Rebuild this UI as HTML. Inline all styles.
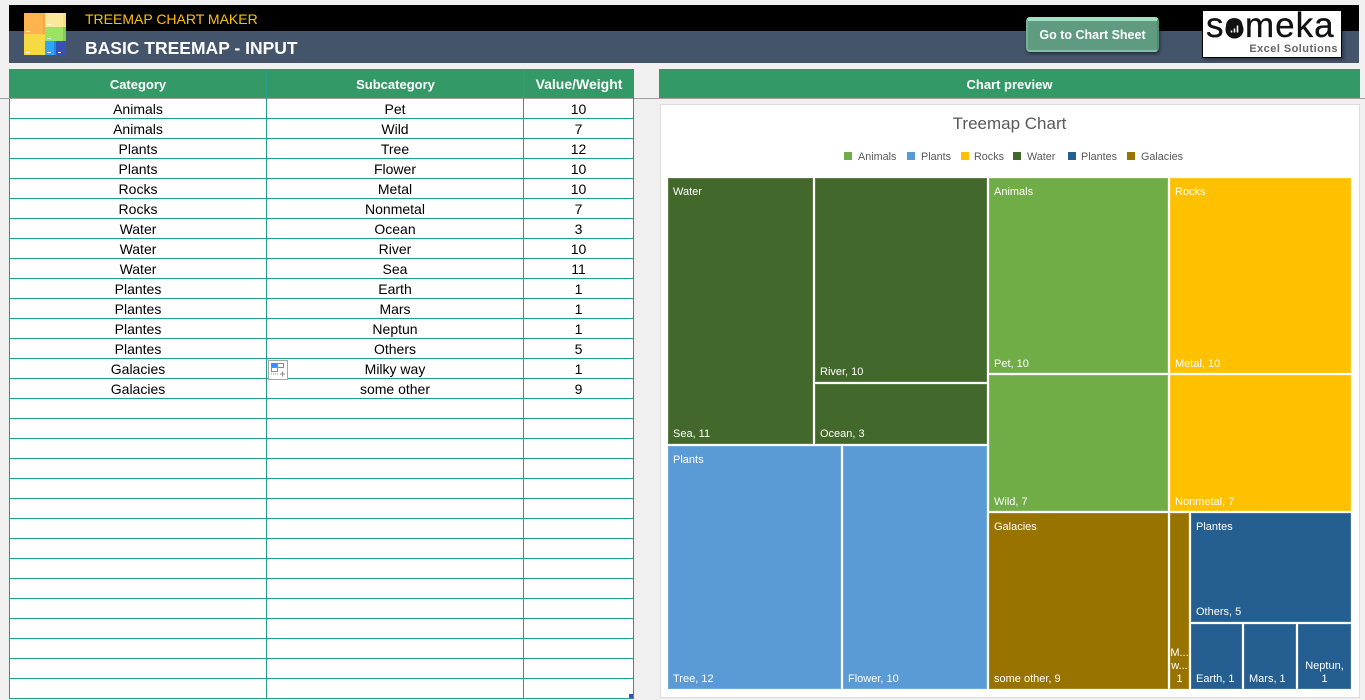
<!DOCTYPE html>
<html><head><meta charset="utf-8">
<style>
html,body{margin:0;padding:0;width:1365px;height:700px;overflow:hidden;background:#f0f0f0;font-family:"Liberation Sans",sans-serif}
.a{position:absolute}
#hb{left:9px;top:5px;width:1350px;height:26px;background:#000}
#hs{left:9px;top:31px;width:1350px;height:32px;background:#44546a}
.gh{top:69px;height:29px;background:#339966;color:#fff;font-weight:bold;font-size:13px;line-height:31px;text-align:center}
#line{left:0;top:98px;width:1365px;height:1px;background:#a0a0a0}
table{position:absolute;left:9px;top:98px;border-collapse:collapse;table-layout:fixed;width:624px;background:#fff}
td{border:1px solid #1f9e8c;height:17px;padding:2px 0 0;font-size:14px;line-height:17px;text-align:center;color:#000;overflow:hidden;white-space:nowrap}
tr:first-child td{border-top-color:#a0a0a0}
#chart{left:660px;top:104px;width:700px;height:594px;background:#fff;border:1px solid #dcdcdc;box-sizing:border-box}
.t{position:absolute;color:#fff;font-size:11px;line-height:13px;box-sizing:border-box;overflow:hidden;box-shadow:inset 0 0 0 1px rgba(255,255,255,.14)}
.t span{position:absolute;left:5px;white-space:nowrap}
.t .top{top:8px}.t .bot{bottom:3px}.t .b2{bottom:2px}
.g{background:#43682b}.b{background:#5b9bd5}.lg{background:#70ad47}.y{background:#ffc000}.br{background:#997300}.n{background:#255e91}
.lgd{top:151px;font-size:10.8px;line-height:12px;color:#595959;white-space:nowrap}
.sq{top:152px;width:8px;height:8px}
</style></head><body>
<div class="a" id="hb"></div>
<div class="a" id="hs"></div>

<svg class="a" style="left:24px;top:13px" width="42" height="42" viewBox="0 0 42 42">
<rect x="0" y="0" width="21" height="21" fill="#fdb44e"/><rect x="19" y="0" width="2" height="21" fill="#f6a64a"/>
<rect x="21" y="0" width="21" height="14" fill="#fbe99a"/><rect x="39" y="0" width="3" height="14" fill="#f4e07c"/>
<rect x="21" y="14" width="21" height="14" fill="#9be265"/><rect x="39" y="14" width="3" height="14" fill="#7fcf55"/>
<rect x="0" y="21" width="21" height="21" fill="#f5da46"/>
<rect x="21" y="28" width="9" height="14" fill="#2ea6fb"/><rect x="30" y="28" width="2" height="14" fill="#1f8ae8"/>
<rect x="32" y="28" width="10" height="14" fill="#3a50b8"/>
<g fill="#fff"><rect x="2" y="18" width="4" height="1"/><rect x="23" y="11" width="4" height="1"/><rect x="2" y="39" width="4" height="1"/><rect x="23" y="25" width="4" height="1"/><rect x="23" y="39" width="4" height="1"/><rect x="34" y="39" width="3" height="1"/></g>
</svg>

<div class="a" style="left:85px;top:10px;font-size:14px;line-height:18px;color:#ffc000;white-space:nowrap">TREEMAP CHART MAKER</div>
<div class="a" style="left:85px;top:36px;font-size:17.5px;line-height:24px;color:#fff;font-weight:bold;white-space:nowrap">BASIC TREEMAP - INPUT</div>

<div class="a" style="left:1026px;top:17px;width:133px;height:35px;box-sizing:border-box;border-radius:4px;background:#5f9b80;box-shadow:1px 2px 3px rgba(0,0,0,.45);border-top:4px solid #a3e0c0;border-bottom:2px solid #86bda2;border-left:2px solid #77b095;border-right:2px solid #4f8a70;color:#fff;font-weight:bold;font-size:12.5px;line-height:28px;text-align:center;white-space:nowrap">Go to Chart Sheet</div>

<div class="a" style="left:1202px;top:10px;width:140px;height:48px;box-sizing:border-box;background:#fff;border:1px solid #000;box-shadow:2px 2px 3px rgba(0,0,0,.3);overflow:hidden">
<div class="a" style="left:3px;top:-5px;font-size:35px;letter-spacing:1px;line-height:40px;color:#111;-webkit-text-stroke:.3px #111;white-space:nowrap">someka</div>
<svg class="a" style="left:22px;top:9px" width="19" height="19" viewBox="0 0 19 19"><circle cx="9.5" cy="9.5" r="9" fill="#111"/><path d="M6.5 12.5v-2M9.5 12.5v-4M12.5 12.5v-7" stroke="#fff" stroke-width="1.6"/></svg>
<div class="a" style="right:3px;top:32px;font-size:11px;line-height:13px;font-weight:bold;color:#666;letter-spacing:.45px;white-space:nowrap">Excel Solutions</div>
</div>

<div class="a gh" style="left:9px;width:258px">Category</div>
<div class="a gh" style="left:267px;width:257px">Subcategory</div>
<div class="a gh" style="left:524px;width:110px;font-size:14px">Value/Weight</div>
<div class="a" style="left:266px;top:69px;width:1px;height:29px;background:#2a9d8f"></div>
<div class="a" style="left:523px;top:69px;width:1px;height:29px;background:#2a9d8f"></div>
<div class="a gh" style="left:659px;width:701px">Chart preview</div>
<div class="a" id="line"></div>

<table>
<colgroup><col style="width:257px"><col style="width:257px"><col style="width:110px"></colgroup>
<tr><td>Animals</td><td>Pet</td><td>10</td></tr>
<tr><td>Animals</td><td>Wild</td><td>7</td></tr>
<tr><td>Plants</td><td>Tree</td><td>12</td></tr>
<tr><td>Plants</td><td>Flower</td><td>10</td></tr>
<tr><td>Rocks</td><td>Metal</td><td>10</td></tr>
<tr><td>Rocks</td><td>Nonmetal</td><td>7</td></tr>
<tr><td>Water</td><td>Ocean</td><td>3</td></tr>
<tr><td>Water</td><td>River</td><td>10</td></tr>
<tr><td>Water</td><td>Sea</td><td>11</td></tr>
<tr><td>Plantes</td><td>Earth</td><td>1</td></tr>
<tr><td>Plantes</td><td>Mars</td><td>1</td></tr>
<tr><td>Plantes</td><td>Neptun</td><td>1</td></tr>
<tr><td>Plantes</td><td>Others</td><td>5</td></tr>
<tr><td>Galacies</td><td>Milky way</td><td>1</td></tr>
<tr><td>Galacies</td><td>some other</td><td>9</td></tr>
<tr><td></td><td></td><td></td></tr><tr><td></td><td></td><td></td></tr><tr><td></td><td></td><td></td></tr>
<tr><td></td><td></td><td></td></tr><tr><td></td><td></td><td></td></tr><tr><td></td><td></td><td></td></tr>
<tr><td></td><td></td><td></td></tr><tr><td></td><td></td><td></td></tr><tr><td></td><td></td><td></td></tr>
<tr><td></td><td></td><td></td></tr><tr><td></td><td></td><td></td></tr><tr><td></td><td></td><td></td></tr>
<tr><td></td><td></td><td></td></tr><tr><td></td><td></td><td></td></tr><tr><td></td><td></td><td></td></tr>
</table>

<svg class="a" style="left:268px;top:360px" width="20" height="20" viewBox="0 0 20 20">
<rect x=".5" y=".5" width="19" height="19" fill="#fff" stroke="#a6a6a6"/>
<rect x="3.5" y="3.5" width="6" height="4" fill="#3b8cff" stroke="#3b8cff"/>
<rect x="9.5" y="3.5" width="6" height="4" fill="none" stroke="#8c8c8c"/>
<rect x="3.5" y="7.5" width="6" height="4" fill="none" stroke="#8c8c8c"/>
<path d="M3 14h1M5 14h1M7 14h1M9 14h1" stroke="#8c8c8c"/>
<path d="M12 14h5M14.5 11.5v5" stroke="#8c8c8c"/>
</svg>
<div class="a" style="left:629px;top:694px;width:4px;height:4px;background:#3f51b5"></div>

<div class="a" id="chart"></div>
<div class="a" style="left:660px;width:699px;top:114px;text-align:center;font-size:17px;line-height:20px;color:#595959">Treemap Chart</div>

<div class="a sq lg" style="left:844px"></div><div class="a lgd" style="left:858px">Animals</div>
<div class="a sq b" style="left:907px"></div><div class="a lgd" style="left:921px">Plants</div>
<div class="a sq y" style="left:961px"></div><div class="a lgd" style="left:974px">Rocks</div>
<div class="a sq g" style="left:1013px"></div><div class="a lgd" style="left:1027px">Water</div>
<div class="a sq n" style="left:1068px"></div><div class="a lgd" style="left:1081px">Plantes</div>
<div class="a sq br" style="left:1127px"></div><div class="a lgd" style="left:1141px">Galacies</div>

<div class="t g" style="left:668px;top:178px;width:145px;height:266px"><span class="top">Water</span><span class="bot">Sea, 11</span></div>
<div class="t g" style="left:815px;top:178px;width:172px;height:204px"><span class="bot">River, 10</span></div>
<div class="t g" style="left:815px;top:384px;width:172px;height:60px"><span class="bot">Ocean, 3</span></div>
<div class="t b" style="left:668px;top:446px;width:173px;height:243px"><span class="top">Plants</span><span class="bot">Tree, 12</span></div>
<div class="t b" style="left:843px;top:446px;width:144px;height:243px"><span class="bot">Flower, 10</span></div>
<div class="t lg" style="left:989px;top:178px;width:179px;height:195px"><span class="top">Animals</span><span class="b2">Pet, 10</span></div>
<div class="t lg" style="left:989px;top:375px;width:179px;height:136px"><span class="b2">Wild, 7</span></div>
<div class="t y" style="left:1170px;top:178px;width:181px;height:195px"><span class="top">Rocks</span><span class="b2">Metal, 10</span></div>
<div class="t y" style="left:1170px;top:375px;width:181px;height:136px"><span class="b2">Nonmetal, 7</span></div>
<div class="t br" style="left:989px;top:513px;width:179px;height:176px"><span class="top">Galacies</span><span class="bot">some other, 9</span></div>
<div class="t br" style="left:1170px;top:513px;width:19px;height:176px"><span class="bot" style="left:0;width:19px;text-align:center">M...<br>w...<br>1</span></div>
<div class="t n" style="left:1191px;top:513px;width:160px;height:109px"><span class="top">Plantes</span><span class="bot">Others, 5</span></div>
<div class="t n" style="left:1191px;top:624px;width:51px;height:65px"><span class="bot">Earth, 1</span></div>
<div class="t n" style="left:1244px;top:624px;width:52px;height:65px"><span class="bot">Mars, 1</span></div>
<div class="t n" style="left:1298px;top:624px;width:53px;height:65px"><span class="bot" style="left:0;width:53px;text-align:center">Neptun,<br>1</span></div>
</body></html>
